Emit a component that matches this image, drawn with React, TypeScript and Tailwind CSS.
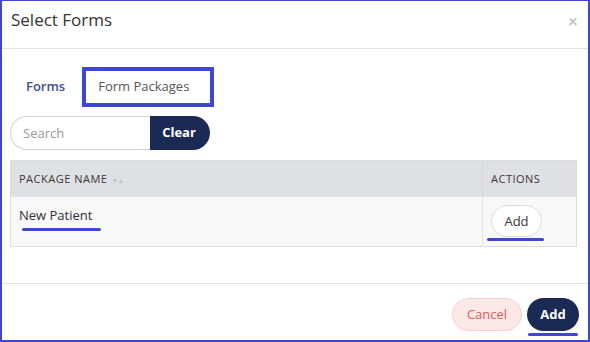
import { useState } from "react"

const font = { fontFamily: '"Open Sans", "Noto Sans", Arial, sans-serif' }

function Mark({ className }: { className: string }) {
  // hand-drawn review underline
  return <span className={`absolute h-[3px] rounded-full bg-[#3f48cc] ${className}`} />
}

export default function App() {
  const [query, setQuery] = useState("")
  const [tab, setTab] = useState<"forms" | "packages">("packages")

  return (
    <div style={font} className="w-[590px] h-[342px] bg-white border-2 border-t border-[#3f48cc] flex flex-col text-[#333]">
      {/* Header */}
      <div className="h-[48px] border-b border-[#e3e3e3] flex items-start justify-between pl-[9px] pr-[10px] pt-[7px]">
        <h2 className="text-[17px] leading-[24px] text-[#333]">Select Forms</h2>
        <button className="mt-[5px] text-[#c8c8c8] text-[18px] leading-[16px] font-bold">×</button>
      </div>

      {/* Body */}
      <div className="flex-1 px-[8px] pt-[18px]">
        <div className="flex items-center h-[40px]">
          <button
            onClick={() => setTab("forms")}
            className={`ml-[16px] mr-[17px] text-[13px] font-semibold ${tab === "forms" ? "text-[#555]" : "text-[#3d4f8f]"}`}
          >
            Forms
          </button>
          <button
            onClick={() => setTab("packages")}
            className="h-[40px] w-[132px] border-4 border-[#3f48cc] pl-[12px] text-left text-[13px] font-medium text-[#555]"
          >
            Form Packages
          </button>
        </div>

        <div className="flex mt-[9px] h-[34px]">
          <input
            value={query}
            onChange={(e) => setQuery(e.target.value)}
            placeholder="Search"
            className="w-[140px] h-[34px] rounded-l-full border border-[#d4d4d4] border-r-0 pl-[12px] text-[13px] placeholder:text-[#9a9a9a] outline-none"
          />
          <button
            onClick={() => setQuery("")}
            className="w-[60px] h-[34px] rounded-r-full bg-[#1b2a55] text-white text-[13px] font-bold pr-[2px]"
          >
            Clear
          </button>
        </div>

        <table className="mt-[10px] w-[567px] border-collapse border border-[#dcdcdc] text-left">
          <thead>
            <tr className="h-[36px] bg-[#dfe0e4]">
              <th className="pl-[8px] text-[11px] font-medium tracking-[0.5px] text-[#3d3535]">
                PACKAGE NAME
                <span className="ml-[4px] text-[7px] text-[#c3c3c6] tracking-[-1px]">▼▲</span>
              </th>
              <th className="w-[94px] pl-[8px] border-l border-[#d6d6d6] text-[11px] font-medium tracking-[0.5px] text-[#3d3535]">
                ACTIONS
              </th>
            </tr>
          </thead>
          <tbody>
            <tr className="h-[50px] bg-[#f8f8f8]">
              <td className="pl-[8px] pb-[12px] text-[13px] text-[#2f2f3a]">
                <span className="relative inline-block">
                  New Patient
                  <Mark className="left-[3px] top-[22px] w-[79px]" />
                </span>
              </td>
              <td className="border-l border-[#e3e3e3] pl-[8px]">
                <span className="relative inline-block">
                  <button className="w-[51px] h-[32px] rounded-full bg-white border border-[#dcdcdc] text-[13px] text-[#333]">
                    Add
                  </button>
                  <Mark className="-left-[4px] top-[33px] w-[57px]" />
                </span>
              </td>
            </tr>
          </tbody>
        </table>
      </div>

      {/* Footer */}
      <div className="h-[57px] border-t border-[#e3e3e3] flex justify-end items-start gap-[5px] pt-[14px] pr-[9px]">
        <button className="w-[70px] h-[33px] rounded-full bg-[#fde8e8] border border-[#f8cccc] text-[13px] text-[#e05a5a]">
          Cancel
        </button>
        <span className="relative inline-block">
          <button className="w-[52px] h-[33px] rounded-full bg-[#1b2a55] text-white text-[13px] font-bold">Add</button>
          <Mark className="left-[1px] top-[35px] w-[50px]" />
        </span>
      </div>
    </div>
  )
}
